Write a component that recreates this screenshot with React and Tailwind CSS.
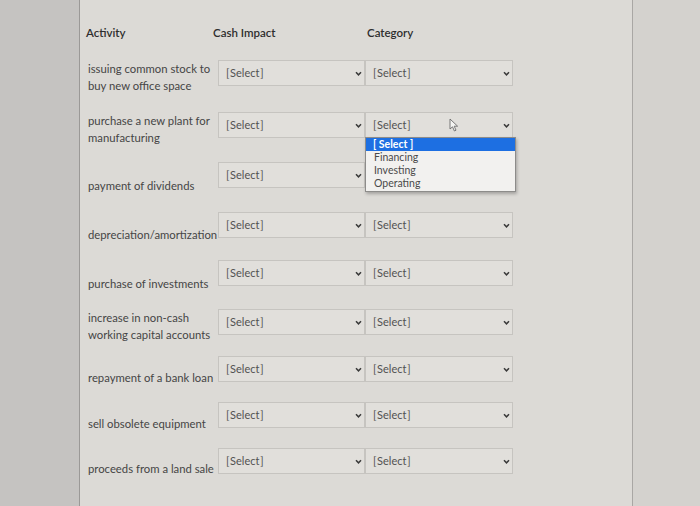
import React from "react";

const rows = [
  { label: ["issuing common stock to", "buy new office space"], h: "h-[52px]", pt: "pt-0" },
  { label: ["purchase a new plant for", "manufacturing"], h: "h-[50px]", pt: "pt-0", open: true },
  { label: ["payment of dividends"], h: "h-[50px]", pt: "pt-[15px]" },
  { label: ["depreciation/amortization"], h: "h-[48px]", pt: "pt-[14px]" },
  { label: ["purchase of investments"], h: "h-[49px]", pt: "pt-[15px]" },
  { label: ["increase in non-cash", "working capital accounts"], h: "h-[47px]", pt: "pt-0" },
  { label: ["repayment of a bank loan"], h: "h-[46px]", pt: "pt-[13px]" },
  { label: ["sell obsolete equipment"], h: "h-[46px]", pt: "pt-[13px]" },
  { label: ["proceeds from a land sale"], h: "h-[46px]", pt: "pt-[12px]" },
];

const Chevron = () => (
  <svg width="7" height="5" viewBox="0 0 7 5" className="shrink-0">
    <path d="M1 1.2 L3.5 3.8 L6 1.2" fill="none" stroke="#3a3a3a" strokeWidth="1.5" />
  </svg>
);

const SelectBox = ({ w }) => (
  <div className={`${w} h-[26px] flex items-center justify-between pl-[7px] pr-[2px] bg-[#e1dfdb] border border-[#c6c4c0] text-[11px] text-[#525252] shrink-0`}>
    <span>[{"\u200A"}Select{"\u200A"}]</span>
    <Chevron />
  </div>
);

const Cursor = () => (
  <svg width="10" height="14" viewBox="0 0 10 14" className="absolute left-[84px] top-[6px]">
    <path d="M1 1 L1 11 L3.5 8.8 L5.4 13 L7 12.2 L5.2 8.2 L8.6 8.2 Z" fill="#f4f4f2" stroke="#6b6b6b" strokeWidth="0.9" strokeLinejoin="round" />
  </svg>
);

const OptionList = () => (
  <div className="absolute left-0 top-[25px] w-[151px] bg-[#f2f1ef] border border-[#8d8c8a] shadow-[1px_2px_3px_rgba(0,0,0,0.25)] z-10 text-[10.5px] leading-[13px] text-[#4a4a4a]">
    <div className="bg-[#1d6fe2] text-white font-bold pl-[7px] h-[13px]">[ Select ]</div>
    <div className="pl-[8px]">Financing</div>
    <div className="pl-[8px]">Investing</div>
    <div className="pl-[8px] pb-[1px]">Operating</div>
  </div>
);

const App = () => {
  return (
    <div className="w-[700px] h-[506px] flex overflow-hidden bg-[#d5d3cf] font-['Lato',sans-serif]">
      <div className="w-[80px] bg-[#c5c3c1] border-r border-[#9b9997] shrink-0" />

      <div className="w-[552px] bg-[#dcdad6] pl-[6px] shrink-0">
        {/* question text, cut off at the top */}
        <div className="h-[3px] overflow-hidden">
          <div className="-mt-[12px] text-[12.5px] leading-[15px] text-[#3c3c3c]">
            is found on the statement of Cash Flows.
          </div>
        </div>

        <div className="flex mt-[21px] h-[18px] items-center text-[11.5px] font-semibold text-[#2e2e2e]">
          <div className="w-[127px]">Activity</div>
          <div className="w-[154px]">Cash Impact</div>
          <div>Category</div>
        </div>

        <div className="mt-[18px]">
          {rows.map((r, i) => (
            <div key={i} className={`flex items-start ${r.h}`}>
              <div className={`w-[132px] shrink-0 whitespace-nowrap text-[11.3px] leading-[17px] text-[#454545] pl-[2px] ${r.pt}`}>
                {r.label.map((l, j) => (
                  <div key={j}>{l}</div>
                ))}
              </div>
              <SelectBox w="w-[147px]" />
              <div className="relative">
                <SelectBox w="w-[148px]" />
                {r.open && (
                  <>
                    <Cursor />
                    <OptionList />
                  </>
                )}
              </div>
            </div>
          ))}
        </div>
      </div>

      <div className="flex-1 bg-[#d4d2ce] border-l border-[#a9a7a4]" />
    </div>
  );
};

export default App;
